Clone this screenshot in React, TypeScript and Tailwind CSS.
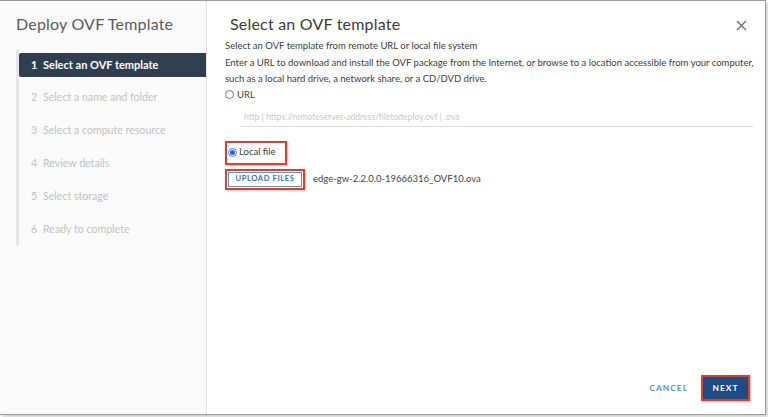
import React from "react";

// OVF 배포 마법사의 첫 단계 화면
const steps = [
  "Select an OVF template",
  "Select a name and folder",
  "Select a compute resource",
  "Review details",
  "Select storage",
  "Ready to complete",
];

export default function App() {
  return (
    <div
      className="h-[417px] w-[768px] overflow-hidden bg-white"
      style={{ fontFamily: "Lato, 'Open Sans', sans-serif" }}
    >
      <div className="flex h-[415px] w-[766px] border-t border-r border-b border-[#9a9a9a] shadow-[2px_2px_3px_rgba(0,0,0,0.2)]">
        {/* 왼쪽 단계 목록 */}
        <aside className="flex w-[207px] shrink-0 flex-col border-r border-[#e4e4e4] bg-[#fafafa]">
          <h1 className="pl-[16px] pt-[12px] text-[16px] leading-[22px] tracking-[0.2px] text-[#5a5a5a]">Deploy OVF Template</h1>
          <div className="ml-[16px] mt-[15px] border-l-[3px] border-[#e6e6e6] pb-[5px]">
            <ol className="flex flex-col gap-[8.9px] pt-[3px]">
              {steps.map((step, i) =>
                i === 0 ? (
                  <li
                    key={step}
                    className="flex h-[24px] items-center rounded-l-[2px] bg-[#2f3f4f] pl-[12px] text-[11px] font-bold text-white"
                  >
                    <span className="w-[12px]">{i + 1}</span>
                    {step}
                  </li>
                ) : (
                  <li key={step} className="flex h-[24px] items-center pl-[12px] text-[10.6px] text-[#c2c2c2]">
                    <span className="w-[12px]">{i + 1}</span>
                    {step}
                  </li>
                ),
              )}
            </ol>
          </div>
        </aside>

        {/* 오른쪽 본문 */}
        <main className="flex flex-1 flex-col pl-[18px] pr-[10px]">
          <div className="flex items-center justify-between pt-[12px]">
            <h2 className="pl-[5px] text-[16px] leading-[22px] tracking-[0.2px] text-[#3a3a3a]">Select an OVF template</h2>
            <svg width="11" height="11" viewBox="0 0 11 11" className="mr-[8px] mt-[3px]">
              <path d="M1 1L10 10M10 1L1 10" stroke="#666" strokeWidth="1.2" />
            </svg>
          </div>
          <div className="mt-[3px] text-[9.5px] leading-[16.5px] text-[#3c3c3c]">
            <p>Select an OVF template from remote URL or local file system</p>
            <p>
              Enter a URL to download and install the OVF package from the Internet, or browse to a location accessible from your computer,
            </p>
            <p>such as a local hard drive, a network share, or a CD/DVD drive.</p>
          </div>
          <label className="flex items-center gap-[3px] text-[9.5px] leading-[14px] text-[#3c3c3c]">
            <span className="h-[9px] w-[9px] rounded-full border border-[#777] bg-white" />
            URL
          </label>
          <div className="ml-[15px] mt-[9px] mr-[2px] border-b border-[#dcdcdc] pb-[3px] pl-[4px] text-[8.6px] leading-[12px] text-[#c8c8c8]">
            http | https://remoteserver-address/filetodeploy.ovf | .ova
          </div>

          <div className="mt-[14px] flex">
            <div className="flex h-[24px] w-[62px] items-center gap-[2px] border-2 border-[#d9402e] pl-[1px] text-[9.5px] text-[#3c3c3c] shadow-[1px_1px_2px_rgba(0,0,0,0.25)]">
              <span className="flex h-[9px] w-[9px] items-center justify-center rounded-full border border-[#4a7be0] bg-white">
                <span className="h-[5px] w-[5px] rounded-full bg-[#1f5ff0]" />
              </span>
              Local file
            </div>
          </div>

          <div className="mt-[4px] flex items-center gap-[8px]">
            <div className="border-2 border-[#d9402e] p-[1px] shadow-[1px_1px_2px_rgba(0,0,0,0.25)]">
              <div className="flex h-[15px] w-[74px] items-center justify-center border border-[#5b8fc8] bg-white text-[7.6px] font-bold tracking-[0.6px] text-[#3572b0]">
                UPLOAD FILES
              </div>
            </div>
            <span className="text-[9.5px] text-[#444]">edge-gw-2.2.0.0-19666316_OVF10.ova</span>
          </div>

          <div className="mt-auto mb-[13px] flex items-center justify-end gap-[13px] pr-[5px]">
            <span className="text-[8.4px] font-bold tracking-[1px] text-[#5b8fc8]">CANCEL</span>
            <div className="flex h-[26px] w-[49px] items-center justify-center border-2 border-[#d9402e] bg-[#1d4b84] text-[8.4px] font-bold tracking-[1px] text-white shadow-[1px_1px_2px_rgba(0,0,0,0.3)]">
              NEXT
            </div>
          </div>
        </main>
      </div>
    </div>
  );
}
